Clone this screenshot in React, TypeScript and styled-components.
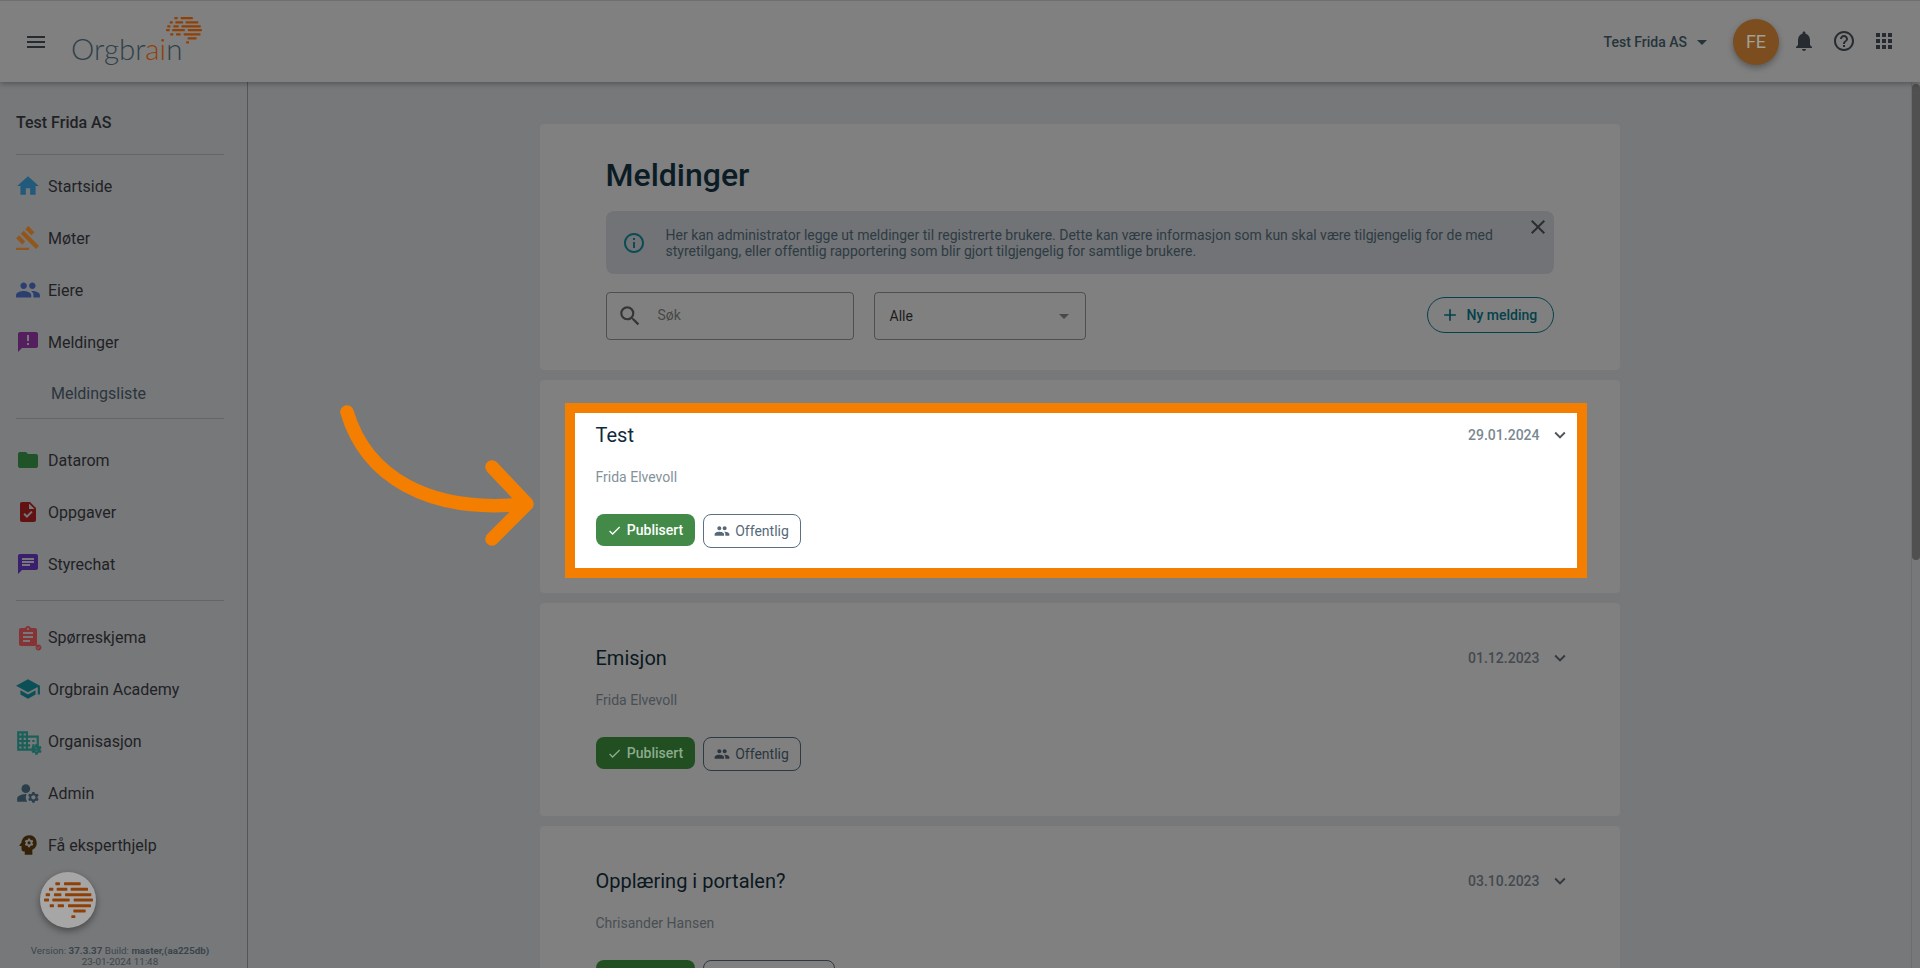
import styled, { createGlobalStyle } from 'styled-components'
import { ReactNode } from 'react'
import {
  MdAdd,
  MdAnnouncement,
  MdApps,
  MdArrowDropDown,
  MdAssignment,
  MdChat,
  MdCheck,
  MdCheckCircle,
  MdClose,
  MdDomain,
  MdExpandMore,
  MdFolder,
  MdGavel,
  MdHelpOutline,
  MdHome,
  MdInfoOutline,
  MdManageAccounts,
  MdMenu,
  MdNotifications,
  MdPeople,
  MdPsychology,
  MdSchool,
  MdSearch,
  MdSettings,
  MdTask
} from 'react-icons/md'

const GlobalStyle = createGlobalStyle`
  html, body {
    margin: 0;
    height: 100%;
    overflow: hidden;
  }
  body {
    font-family: Roboto, "Liberation Sans", sans-serif;
    background: #77787a;
  }
  * {
    box-sizing: border-box;
  }
`

const brainBars = [
  [34, 5, 14], [60, 5, 50],
  [15, 22, 13], [38, 22, 32], [80, 22, 52],
  [5, 38, 13], [30, 38, 22], [63, 38, 79],
  [0, 54, 15], [25, 54, 52], [89, 54, 58],
  [17, 71, 13], [41, 71, 19], [72, 71, 69],
  [88, 87, 37],
  [82, 104, 12]
]

function Brain({ width }: { width: number }) {
  return (
    <svg width={width} viewBox="0 0 147 109" fill="#8f4006" style={{ display: 'block' }}>
      {brainBars.map(([x, y, w]) => (
        <rect key={`${x}-${y}`} x={x} y={y - 4.5} width={w} height={9} rx={2} />
      ))}
    </svg>
  )
}

function Organisation() {
  return (
    <IconStack>
      <MdDomain size={26} />
      <IconBadge>
        <MdSettings size={13} />
      </IconBadge>
    </IconStack>
  )
}

function Survey() {
  return (
    <IconStack>
      <MdAssignment size={24} />
      <IconBadge>
        <MdCheckCircle size={7} />
      </IconBadge>
    </IconStack>
  )
}

interface NavEntry {
  label: string
  color: string
  icon: ReactNode
}

const mainNav: NavEntry[] = [
  { label: 'Startside', color: '#225a7c', icon: <MdHome size={26} /> },
  { label: 'Møter', color: '#93561a', icon: <MdGavel size={26} /> },
  { label: 'Eiere', color: '#2a3e70', icon: <MdPeople size={26} /> },
  { label: 'Meldinger', color: '#53205d', icon: <MdAnnouncement size={24} /> }
]

const workNav: NavEntry[] = [
  { label: 'Datarom', color: '#205328', icon: <MdFolder size={24} /> },
  { label: 'Oppgaver', color: '#631214', icon: <MdTask size={24} /> },
  { label: 'Styrechat', color: '#391f6d', icon: <MdChat size={24} /> }
]

const toolNav: NavEntry[] = [
  { label: 'Spørreskjema', color: '#863336', icon: <Survey /> },
  { label: 'Orgbrain Academy', color: '#0c5057', icon: <MdSchool size={26} /> },
  { label: 'Organisasjon', color: '#1b5f59', icon: <Organisation /> },
  { label: 'Admin', color: '#2a3f4b', icon: <MdManageAccounts size={26} /> },
  { label: 'Få eksperthjelp', color: '#352008', icon: <MdPsychology size={26} /> }
]

function NavList({ items }: { items: NavEntry[] }) {
  return (
    <>
      {items.map(item => (
        <NavRow key={item.label}>
          <NavIcon $color={item.color}>{item.icon}</NavIcon>
          {item.label}
        </NavRow>
      ))}
    </>
  )
}

interface MessageProps {
  title: string
  author: string
  date: string
  highlighted?: boolean
  audienceWidth?: number
}

function MessageCard({ title, author, date, highlighted = false, audienceWidth = 98 }: MessageProps) {
  return (
    <Panel $variant="message">
      <Frame $highlighted={highlighted}>
        <MessageHead>
          <MessageTitle $highlighted={highlighted}>{title}</MessageTitle>
          <MessageMeta>
            <MessageDate $highlighted={highlighted}>{date}</MessageDate>
            <MdExpandMore size={22} color={highlighted ? '#50565b' : '#34393d'} />
          </MessageMeta>
        </MessageHead>
        <Author $highlighted={highlighted}>{author}</Author>
        <Tags>
          <PublishedTag $highlighted={highlighted}>
            <MdCheck size={15} />
            Publisert
          </PublishedTag>
          <AudienceTag $highlighted={highlighted} $width={audienceWidth}>
            <MdPeople size={16} />
            Offentlig
          </AudienceTag>
        </Tags>
      </Frame>
    </Panel>
  )
}

export default function App() {
  return (
    <Page>
      <GlobalStyle />
      <TopBar>
        <TopLeft>
          <MdMenu size={24} color="#252b30" />
          <Logo>
            <LogoBrain>
              <Brain width={36} />
            </LogoBrain>
            Orgbr<LogoAccent>ai</LogoAccent>n
          </Logo>
        </TopLeft>
        <TopRight>
          <OrgPicker>
            Test Frida AS
            <MdArrowDropDown size={24} />
          </OrgPicker>
          <Avatar>FE</Avatar>
          <TopIcons>
            <MdNotifications size={24} />
            <MdHelpOutline size={24} />
            <MdApps size={24} />
          </TopIcons>
        </TopRight>
      </TopBar>

      <Body>
        <Sidebar>
          <OrgName>Test Frida AS</OrgName>
          <NavDivider $before={17} $after={5} />
          <NavList items={mainNav} />
          <SubRow>Meldingsliste</SubRow>
          <NavDivider $before={0} $after={15} />
          <NavList items={workNav} />
          <NavDivider $before={10} $after={10} />
          <NavList items={toolNav} />
          <Fab>
            <Brain width={49} />
          </Fab>
          <Version>
            Version: <b>37.3.37</b> Build: <b>master,(aa225db)</b>
            <br />
            23-01-2024 11:48
          </Version>
        </Sidebar>

        <Main>
          <Panel $variant="header">
            <Heading>Meldinger</Heading>
            <Notice>
              <NoticeIcon>
                <MdInfoOutline size={24} />
              </NoticeIcon>
              <NoticeText>
                Her kan administrator legge ut meldinger til registrerte brukere. Dette kan være informasjon som kun
                skal være tilgjengelig for de med styretilgang, eller offentlig rapportering som blir gjort
                tilgjengelig for samtlige brukere.
              </NoticeText>
              <NoticeClose>
                <MdClose size={24} />
              </NoticeClose>
            </Notice>
            <Filters>
              <SearchBox>
                <MdSearch size={26} color="#353535" />
                <SearchLabel>Søk</SearchLabel>
              </SearchBox>
              <SelectBox>
                Alle
                <MdArrowDropDown size={24} color="#484848" />
              </SelectBox>
              <NewButton>
                <MdAdd size={20} />
                Ny melding
              </NewButton>
            </Filters>
          </Panel>

          <MessageCard title="Test" author="Frida Elvevoll" date="29.01.2024" highlighted />
          <MessageCard title="Emisjon" author="Frida Elvevoll" date="01.12.2023" />
          <MessageCard title="Opplæring i portalen?" author="Chrisander Hansen" date="03.10.2023" audienceWidth={132} />
        </Main>

        <ScrollTrack>
          <ScrollThumb />
        </ScrollTrack>
      </Body>

      <Pointer width="240" height="190" viewBox="320 380 240 190">
        <path
          d="M347 412 C366 476 428 514 524 504 M492 467 L527 504 L492 539"
          fill="none"
          stroke="#f47e00"
          strokeWidth="13.5"
          strokeLinecap="round"
          strokeLinejoin="round"
        />
      </Pointer>
    </Page>
  )
}

const Page = styled.div`
  position: relative;
  height: 100vh;
  display: flex;
  flex-direction: column;
  overflow: hidden;
  background: #77787a;
`

const TopBar = styled.header`
  flex: none;
  height: 82px;
  display: flex;
  align-items: center;
  justify-content: space-between;
  background: #808080;
  border-top: 1px solid #6f6f6f;
  box-shadow: 0 2px 5px rgba(0, 0, 0, 0.28);
  position: relative;
  z-index: 1;
  padding: 0 24px 0 24px;
`

const TopLeft = styled.div`
  display: flex;
  align-items: center;
  gap: 23px;
`

const Logo = styled.div`
  position: relative;
  margin-top: 15px;
  font-family: Lato, "Open Sans", sans-serif;
  font-weight: 300;
  font-size: 29.5px;
  line-height: 36px;
  color: #2f4149;
`

const LogoAccent = styled.span`
  color: #8f4006;
`

const LogoBrain = styled.div`
  position: absolute;
  left: 95px;
  top: -14px;
`

const TopRight = styled.div`
  display: flex;
  align-items: center;
`

const OrgPicker = styled.div`
  display: flex;
  align-items: center;
  gap: 3px;
  font-size: 14px;
  font-weight: 500;
  color: #26343b;
  margin-right: 19px;
`

const Avatar = styled.div`
  width: 46px;
  height: 46px;
  border-radius: 50%;
  display: flex;
  align-items: center;
  justify-content: center;
  background: #7c4e1f;
  color: #a29f97;
  font-size: 18px;
  box-shadow: 0 3px 6px rgba(0, 0, 0, 0.3);
`

const TopIcons = styled.div`
  display: flex;
  gap: 16px;
  margin: -2px 0 0 13px;
  color: #252b30;
`

const Body = styled.div`
  flex: 1;
  min-height: 0;
  display: flex;
`

const Sidebar = styled.aside`
  flex: none;
  width: 248px;
  padding: 27px 23px 0 16px;
  border-right: 1px solid #545557;
  color: #1f2225;
  font-size: 16px;
`

const OrgName = styled.div`
  height: 28px;
  line-height: 28px;
  font-weight: 500;
`

const NavDivider = styled.div<{ $before: number; $after: number }>`
  height: 1px;
  background: #646568;
  margin-top: ${({ $before }) => $before}px;
  margin-bottom: ${({ $after }) => $after}px;
`

const NavRow = styled.div`
  height: 52px;
  display: flex;
  align-items: center;
`

const NavIcon = styled.span<{ $color: string }>`
  width: 32px;
  flex: none;
  display: flex;
  justify-content: center;
  margin-left: -4px;
  margin-right: 4px;
  color: ${({ $color }) => $color};
`

const IconStack = styled.span`
  position: relative;
  display: flex;
`

const IconBadge = styled.span`
  position: absolute;
  right: -2px;
  bottom: -2px;
  display: flex;
`

const SubRow = styled.div`
  height: 50px;
  line-height: 52px;
  padding-left: 35px;
  color: #2a353c;
`

const Fab = styled.div`
  width: 56px;
  height: 56px;
  border-radius: 50%;
  margin: 1px 0 0 24px;
  display: flex;
  align-items: center;
  justify-content: center;
  background: #a6a6a6;
  box-shadow: 0 3px 7px rgba(0, 0, 0, 0.4);
`

const Version = styled.div`
  margin: 17px 0 0 -16px;
  width: 240px;
  text-align: center;
  font-size: 9.8px;
  line-height: 11px;
  color: #3a454b;
`

const Main = styled.main`
  flex: 1;
  min-width: 0;
  display: flex;
  flex-direction: column;
  align-items: center;
  gap: 10px;
  padding-top: 42px;
`

const Panel = styled.section<{ $variant: 'header' | 'message' }>`
  flex: none;
  width: 1080px;
  border-radius: 4px;
  background: #808080;
  padding: ${({ $variant }) => ($variant === 'header' ? '0 66px' : '23px 33px 15px 25px')};
  height: ${({ $variant }) => ($variant === 'header' ? '246px' : '213px')};
`

const Heading = styled.h1`
  margin: 0;
  padding-top: 32px;
  font-size: 32px;
  line-height: 38px;
  font-weight: 500;
  color: #0c1c25;
`

const Notice = styled.div`
  margin-top: 17px;
  height: 63px;
  display: flex;
  align-items: center;
  padding: 0 4px 0 16px;
  border-radius: 8px;
  background: #717376;
`

const NoticeIcon = styled.span`
  display: flex;
  color: #094c55;
`

const NoticeText = styled.p`
  margin: 0 0 0 20px;
  width: 832px;
  font-size: 14px;
  line-height: 16px;
  color: #2e3b43;
`

const NoticeClose = styled.span`
  display: flex;
  align-self: flex-start;
  margin: 4px 0 0 auto;
  color: #2b2e30;
`

const Filters = styled.div`
  margin-top: 18px;
  display: flex;
  align-items: center;
`

const SearchBox = styled.div`
  width: 248px;
  height: 48px;
  display: flex;
  align-items: center;
  padding-left: 10px;
  border: 1px solid #4e4f50;
  border-radius: 4px;
`

const SearchLabel = styled.span`
  margin: -3px 0 0 15px;
  font-size: 14px;
  color: #484848;
`

const SelectBox = styled.div`
  width: 212px;
  height: 48px;
  margin-left: 20px;
  display: flex;
  align-items: center;
  justify-content: space-between;
  padding: 0 9px 0 15px;
  border: 1px solid #4e4f50;
  border-radius: 4px;
  font-size: 14px;
  color: #1d1d1d;
`

const NewButton = styled.div`
  margin: -2px 0 0 auto;
  width: 127px;
  height: 36px;
  display: flex;
  align-items: center;
  gap: 7px;
  padding-left: 12px;
  border: 1px solid #05414a;
  border-radius: 18px;
  font-size: 14px;
  font-weight: 500;
  color: #05414a;
`

const Frame = styled.div<{ $highlighted: boolean }>`
  height: 175px;
  padding: 9px 6px 0 21px;
  border: 10px solid ${({ $highlighted }) => ($highlighted ? '#f47e00' : 'transparent')};
  background-clip: padding-box;
  background-color: ${({ $highlighted }) => ($highlighted ? '#ffffff' : 'transparent')};
`

const MessageHead = styled.div`
  display: flex;
  align-items: center;
  justify-content: space-between;
  height: 26px;
`

const MessageTitle = styled.h2<{ $highlighted: boolean }>`
  margin: 0;
  font-size: 20px;
  font-weight: 400;
  color: ${({ $highlighted }) => ($highlighted ? '#0f2b3b' : '#0a1820')};
`

const MessageMeta = styled.div`
  display: flex;
  align-items: center;
  gap: 9px;
`

const MessageDate = styled.span<{ $highlighted: boolean }>`
  font-size: 14px;
  font-weight: 500;
  color: ${({ $highlighted }) => ($highlighted ? '#7a8891' : '#44494f')};
`

const Author = styled.div<{ $highlighted: boolean }>`
  margin-top: 21px;
  font-size: 14px;
  line-height: 16px;
  color: ${({ $highlighted }) => ($highlighted ? '#83929b' : '#484f54')};
`

const Tags = styled.div`
  margin-top: 29px;
  display: flex;
  align-items: flex-start;
  gap: 8px;
`

const PublishedTag = styled.div<{ $highlighted: boolean }>`
  width: 99px;
  height: 32px;
  display: flex;
  align-items: center;
  justify-content: center;
  gap: 5px;
  border-radius: 8px;
  font-size: 14px;
  font-weight: 500;
  background: ${({ $highlighted }) => ($highlighted ? '#438a48' : '#214f22')};
  color: ${({ $highlighted }) => ($highlighted ? '#ffffff' : '#8cab8d')};
`

const AudienceTag = styled.div<{ $highlighted: boolean; $width: number }>`
  width: ${({ $width }) => $width}px;
  height: 34px;
  display: flex;
  align-items: center;
  justify-content: center;
  gap: 5px;
  border-radius: 8px;
  font-size: 14px;
  border: 1px solid ${({ $highlighted }) => ($highlighted ? '#5b7083' : '#2c3a42')};
  color: ${({ $highlighted }) => ($highlighted ? '#56697a' : '#2b363e')};
`

const ScrollTrack = styled.div`
  flex: none;
  width: 9px;
  padding-top: 2px;
  border-left: 1px solid #6c6d6f;
`

const ScrollThumb = styled.div`
  height: 476px;
  border-radius: 4px;
  background: #505050;
`

const Pointer = styled.svg`
  position: absolute;
  left: 320px;
  top: 380px;
  pointer-events: none;
`
